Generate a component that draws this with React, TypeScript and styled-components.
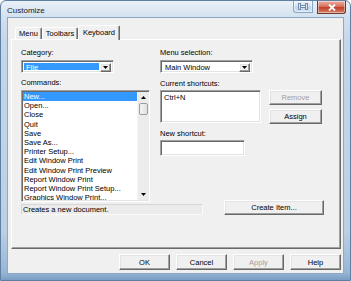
import React from 'react';
import styled, { createGlobalStyle, css } from 'styled-components';

const GlobalStyle = createGlobalStyle`
  html, body { margin: 0; padding: 0; background: #ffffff; }
  body {
    font-family: "Liberation Sans", Arial, sans-serif;
    font-size: 7.5px;
    color: #000;
  }
  * { box-sizing: border-box; }
`;

const raised = css`
  border: 1px solid;
  border-color: #ffffff #696969 #696969 #ffffff;
  box-shadow: inset -1px -1px 0 #a0a0a0, inset 1px 1px 0 #e3e3e3;
  background: #f0f0f0;
`;

const sunken = css`
  border: 1px solid;
  border-color: #a0a0a0 #ffffff #ffffff #a0a0a0;
  box-shadow: inset 1px 1px 0 #696969, inset -1px -1px 0 #e3e3e3;
  background: #ffffff;
`;

const Window = styled.div`
  width: 351px;
  height: 281px;
  display: flex;
  flex-direction: column;
  border: 1px solid #5f7fa3;
  border-radius: 6px 6px 0 0;
  background: linear-gradient(
    to bottom,
    #e9f0f8 0px,
    #d3e1ef 16px,
    #c4d6e9 40px,
    #bcd0e5 230px,
    #96b5d5 272px,
    #7196bd 281px
  );
  padding: 0 6px 6px 6px;
`;

const TitleBar = styled.div`
  height: 16px;
  display: flex;
  align-items: flex-start;
`;

const TitleText = styled.span`
  margin-top: 5px;
  line-height: 10px;
  font-size: 8px;
  color: #1a1a1a;
`;

const Controls = styled.div`
  margin-left: auto;
  margin-right: -2px;
  display: flex;
  gap: 4px;
`;

const CaptionButton = styled.div<{ $close?: boolean }>`
  width: ${p => (p.$close ? 29 : 20)}px;
  height: ${p => (p.$close ? 13 : 12)}px;
  display: flex;
  align-items: center;
  justify-content: center;
  border: 1px solid ${p => (p.$close ? '#70382c' : '#8aa5c2')};
  border-top: none;
  border-radius: ${p => (p.$close ? '0 0 3px 0' : '0 0 0 3px')};
  background: ${p =>
    p.$close
      ? 'linear-gradient(to bottom, #e9b0a4 0%, #d8725d 45%, #c2402a 55%, #d8826a 100%)'
      : 'linear-gradient(to bottom, #eef3f9 0%, #d7e3f0 45%, #c3d5e8 55%, #d3e2f1 100%)'};
  box-shadow: inset 0 0 0 1px rgba(255, 255, 255, 0.45);
`;

const Client = styled.div`
  flex: 1;
  display: flex;
  flex-direction: column;
  background: #f0f0f0;
  border: 1px solid #8ea9c6;
  padding: 7px 2px 3px 3px;
`;

const TabRow = styled.div`
  height: 15px;
  margin-bottom: -1px;
  padding-left: 4px;
  display: flex;
  align-items: flex-start;
  position: relative;
  z-index: 1;
`;

const Tab = styled.div<{ $active?: boolean; $w: number }>`
  width: ${p => p.$w}px;
  height: ${p => (p.$active ? 15 : 12)}px;
  margin-top: ${p => (p.$active ? 0 : 2)}px;
  display: flex;
  align-items: center;
  justify-content: center;
  line-height: 10px;
  background: #f0f0f0;
  border-top: 1px solid #ffffff;
  border-left: 1px solid #ffffff;
  border-right: 1px solid #696969;
  border-radius: 2px 2px 0 0;
  box-shadow: inset -1px 0 0 #a0a0a0;
  padding-bottom: ${p => (p.$active ? 1 : 0)}px;
`;

const Panel = styled.div`
  height: 210px;
  display: flex;
  flex-direction: column;
  border: 1px solid;
  border-color: #ffffff #696969 #696969 #ffffff;
  box-shadow: inset -1px -1px 0 #a0a0a0;
  padding: 8px 16px 0 9px;
`;

const Columns = styled.div`
  display: flex;
  gap: 10px;
`;

const Column = styled.div<{ $w?: number }>`
  display: flex;
  flex-direction: column;
  align-items: flex-start;
  ${p => (p.$w ? `width: ${p.$w}px;` : 'flex: 1;')}
`;

const FieldLabel = styled.div<{ $top?: number }>`
  height: 10px;
  line-height: 10px;
  margin-top: ${p => p.$top ?? 0}px;
  margin-bottom: 1px;
  white-space: nowrap;
`;

const Combo = styled.div`
  ${sunken}
  width: 93px;
  height: 13px;
  margin-top: 1px;
  padding: 2px;
  display: flex;
`;

const ComboValue = styled.div<{ $focused?: boolean }>`
  flex: 1;
  line-height: 9px;
  padding-left: 2px;
  background: ${p => (p.$focused ? '#3399ff' : 'transparent')};
  color: ${p => (p.$focused ? '#ffffff' : '#000000')};
  margin-right: 1px;
`;

const ComboArrow = styled.div`
  ${raised}
  width: 11px;
  height: 9px;
  display: flex;
  align-items: center;
  justify-content: center;
`;

const ListBox = styled.div`
  ${sunken}
  width: 129px;
  height: 112px;
  margin-top: 1px;
  padding: 0 0 1px 1px;
  display: flex;
  overflow: hidden;
`;

const Items = styled.div`
  flex: 1;
  padding-top: 1px;
  overflow: hidden;
`;

const Item = styled.div<{ $selected?: boolean }>`
  height: 9.2px;
  line-height: 9.2px;
  padding-left: 1px;
  white-space: nowrap;
  background: ${p => (p.$selected ? '#3399ff' : 'transparent')};
  color: ${p => (p.$selected ? '#ffffff' : '#000000')};
`;

const ScrollBar = styled.div`
  width: 12px;
  margin-top: 1px;
  display: flex;
  flex-direction: column;
  background: #ececec;
  border-left: 1px solid #f6f6f6;
`;

const ScrollArrow = styled.div`
  height: 11px;
  display: flex;
  align-items: center;
  justify-content: center;
`;

const ScrollTrack = styled.div`
  flex: 1;
  display: flex;
  flex-direction: column;
`;

const Thumb = styled.div`
  height: 12px;
  margin: 0 1px;
  border: 1px solid #9d9d9d;
  border-radius: 2px;
  background: linear-gradient(to right, #f4f4f4, #e1e1e1);
`;

const ShortcutRow = styled.div`
  display: flex;
  gap: 8px;
  align-items: flex-start;
`;

const ShortcutList = styled.div`
  ${sunken}
  width: 101px;
  height: 33px;
  padding: 2px 3px;
  line-height: 9px;
`;

const ButtonStack = styled.div`
  display: flex;
  flex-direction: column;
  gap: 4px;
`;

const Button = styled.div<{ $w: number; $h?: number; $disabled?: boolean }>`
  ${raised}
  width: ${p => p.$w}px;
  height: ${p => p.$h ?? 15}px;
  display: flex;
  align-items: center;
  justify-content: center;
  color: ${p => (p.$disabled ? '#a0a0a0' : '#000000')};
  white-space: nowrap;
`;

const TextBox = styled.div`
  ${sunken}
  width: 85px;
  height: 16px;
`;

const StatusRow = styled.div`
  height: 15px;
  margin-top: -2px;
  display: flex;
  align-items: center;
`;

const StatusText = styled.div`
  width: 182px;
  height: 11px;
  margin-top: 3px;
  line-height: 9px;
  padding-left: 1px;
  background: #ebebeb;
  border: 1px solid;
  border-color: #d6d6d6 #fafafa #fafafa #d6d6d6;
  white-space: nowrap;
`;

const CreateWrap = styled.div`
  margin-left: auto;
`;

const ButtonRow = styled.div`
  margin-top: 5px;
  display: flex;
  justify-content: flex-end;
  gap: 6px;
`;

const DownTriangle = () => (
  <svg width="5" height="3" viewBox="0 0 5 3">
    <path d="M0 0 H5 L2.5 3 Z" fill="#000" />
  </svg>
);

const UpTriangle = () => (
  <svg width="5" height="3" viewBox="0 0 5 3">
    <path d="M0 3 H5 L2.5 0 Z" fill="#000" />
  </svg>
);

const commands = [
  'New...',
  'Open...',
  'Close',
  'Quit',
  'Save',
  'Save As...',
  'Printer Setup...',
  'Edit Window Print',
  'Edit Window Print Preview',
  'Report Window Print',
  'Report Window  Print Setup...',
  'Graphics Window Print...',
];

export default function App() {
  return (
    <>
      <GlobalStyle />
      <Window>
        <TitleBar>
          <TitleText>Customize</TitleText>
          <Controls>
            <CaptionButton>
              <svg width="10" height="7" viewBox="0 0 10 7">
                <rect x="0.5" y="0.5" width="2" height="6" fill="#dfe8f2" stroke="#6f8db0" />
                <rect x="7.5" y="0.5" width="2" height="6" fill="#dfe8f2" stroke="#6f8db0" />
                <rect x="2.5" y="2.5" width="5" height="2" fill="#eef3f8" stroke="#6f8db0" />
              </svg>
            </CaptionButton>
            <CaptionButton $close>
              <svg width="8" height="7" viewBox="0 0 8 7">
                <path d="M1 0.5 L7 6.5 M7 0.5 L1 6.5" stroke="#ffffff" strokeWidth="1.8" />
              </svg>
            </CaptionButton>
          </Controls>
        </TitleBar>
        <Client>
          <TabRow>
            <Tab $w={27}>Menu</Tab>
            <Tab $w={36}>Toolbars</Tab>
            <Tab $w={42} $active>
              Keyboard
            </Tab>
          </TabRow>
          <Panel>
            <Columns>
              <Column $w={129}>
                <FieldLabel>Category:</FieldLabel>
                <Combo>
                  <ComboValue $focused>File</ComboValue>
                  <ComboArrow>
                    <DownTriangle />
                  </ComboArrow>
                </Combo>
                <FieldLabel $top={5}>Commands:</FieldLabel>
                <ListBox>
                  <Items>
                    {commands.map((c, i) => (
                      <Item key={c} $selected={i === 0}>
                        {c}
                      </Item>
                    ))}
                  </Items>
                  <ScrollBar>
                    <ScrollArrow>
                      <UpTriangle />
                    </ScrollArrow>
                    <ScrollTrack>
                      <Thumb />
                    </ScrollTrack>
                    <ScrollArrow>
                      <DownTriangle />
                    </ScrollArrow>
                  </ScrollBar>
                </ListBox>
              </Column>
              <Column>
                <FieldLabel>Menu selection:</FieldLabel>
                <Combo>
                  <ComboValue>Main Window</ComboValue>
                  <ComboArrow>
                    <DownTriangle />
                  </ComboArrow>
                </Combo>
                <FieldLabel $top={6}>Current shortcuts:</FieldLabel>
                <ShortcutRow>
                  <ShortcutList>Ctrl+N</ShortcutList>
                  <ButtonStack>
                    <Button $w={53} $disabled>
                      Remove
                    </Button>
                    <Button $w={53}>Assign</Button>
                  </ButtonStack>
                </ShortcutRow>
                <FieldLabel $top={5}>New shortcut:</FieldLabel>
                <TextBox />
              </Column>
            </Columns>
            <StatusRow>
              <StatusText>Creates a new document.</StatusText>
              <CreateWrap>
                <Button $w={100}>Create Item...</Button>
              </CreateWrap>
            </StatusRow>
          </Panel>
          <ButtonRow>
            <Button $w={51} $h={16}>OK</Button>
            <Button $w={51} $h={16}>Cancel</Button>
            <Button $w={51} $h={16} $disabled>
              Apply
            </Button>
            <Button $w={51} $h={16}>Help</Button>
          </ButtonRow>
        </Client>
      </Window>
    </>
  );
}
